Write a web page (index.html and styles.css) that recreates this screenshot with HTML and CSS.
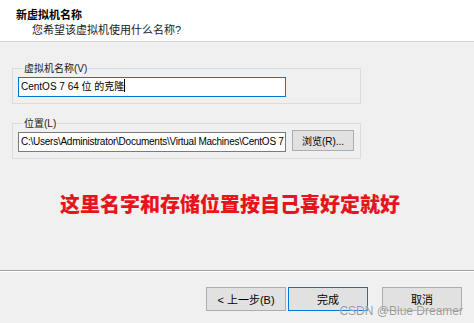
FILE: index.html
```html
<!DOCTYPE html>
<html lang="zh-CN">
<head>
  <meta charset="UTF-8" />
  <meta name="viewport" content="width=device-width, initial-scale=1.0"/>
  <title>新建虚拟机向导</title>
  <link rel="stylesheet" href="styles.css">
</head>
<body>
  <div class="wizard">
    <div class="header">
      <div class="title">新虚拟机名称</div>
      <div class="subtitle">您希望该虚拟机使用什么名称?</div>
    </div>

    <div class="main">
      <fieldset class="group">
        <legend>虚拟机名称(V)</legend>
        <div class="field focused">CentOS 7 64 位 的克隆<span class="caret"></span></div>
      </fieldset>

      <fieldset class="group second">
        <legend>位置(L)</legend>
        <div class="row">
          <div class="field path">C:\Users\Administrator\Documents\Virtual Machines\CentOS 7</div>
          <button class="browse">浏览(R)...</button>
        </div>
      </fieldset>

      <div class="note">这里名字和存储位置按自己喜好定就好</div>
    </div>

    <div class="footer">
      <button>&lt; 上一步(B)</button>
      <button class="default">完成</button>
      <button class="cancel">取消</button>
    </div>

    <div class="watermark">CSDN @Blue Dreamer</div>
  </div>
</body>
</html>
```

FILE: styles.css
```css
html, body {
  margin: 0;
  padding: 0;
}
body {
  font-family: "Liberation Sans", "Noto Sans CJK SC", sans-serif;
  font-size: 10px;
  color: #000;
  background: #f0f0f0;
}
.wizard {
  position: relative;
  width: 474px;
  height: 323px;
  display: flex;
  flex-direction: column;
  overflow: hidden;
}
.header {
  background: #fff;
  height: 42px;
  border-bottom: 1px solid #d2d2d2;
  padding-top: 8px;
  box-sizing: border-box;
  font-size: 11px;
}
.title {
  font-weight: 700;
  line-height: 15px;
  padding-left: 16px;
}
.subtitle {
  line-height: 15px;
  padding-left: 32px;
  color: #1a1a1a;
}
.main {
  flex: 1;
  padding-top: 19px;
}
.group {
  margin: 0 0 0 12px;
  width: 349px;
  box-sizing: border-box;
  border: 1px solid #dcdcdc;
  padding: 1px 6px 6px 5px;
}
.group legend {
  line-height: 15px;
  padding: 0 1px;
  margin-left: 5px;
  color: #1a1a1a;
}
.group.second {
  margin-top: 12px;
}
.field {
  width: 268px;
  height: 20px;
  box-sizing: border-box;
  border: 1px solid #7a7a7a;
  background: #fff;
  line-height: 18px;
  padding-left: 2px;
  white-space: nowrap;
  overflow: hidden;
}
.field.focused {
  border-color: #0078d7;
}
.field.path {
  letter-spacing: -0.25px;
}
.caret {
  display: inline-block;
  width: 1px;
  height: 13px;
  background: #000;
  vertical-align: -2px;
}
.row {
  display: flex;
  align-items: center;
  gap: 6px;
}
button {
  font-family: inherit;
  font-size: 11px;
  color: #000;
  background: #e1e1e1;
  border: 1px solid #adadad;
  padding: 0;
  margin: 0;
  width: 80px;
  height: 24px;
}
.browse {
  font-size: 10px;
  width: 62px;
  height: 21px;
  margin-top: -3px;
}
.note {
  margin-top: 33px;
  padding-left: 60px;
  font-size: 20px;
  line-height: 24px;
  font-weight: 900;
  color: #e8141c;
  font-family: "Noto Sans CJK SC", sans-serif;
}
.footer {
  height: 53px;
  box-sizing: border-box;
  border-top: 1px solid #a0a0a0;
  box-shadow: inset 0 1px 0 #fff;
  padding: 16px 12px 0 0;
  display: flex;
  justify-content: flex-end;
  gap: 2px;
}
.footer .default {
  border-color: #0078d7;
}
.footer .cancel {
  margin-left: 12px;
}
.watermark {
  position: absolute;
  right: 11px;
  bottom: 4px;
  font-family: "Liberation Sans", sans-serif;
  font-size: 12px;
  line-height: 15px;
  color: rgba(120, 120, 120, 0.75);
  text-shadow: 0 0 1px #fff;
}
```
